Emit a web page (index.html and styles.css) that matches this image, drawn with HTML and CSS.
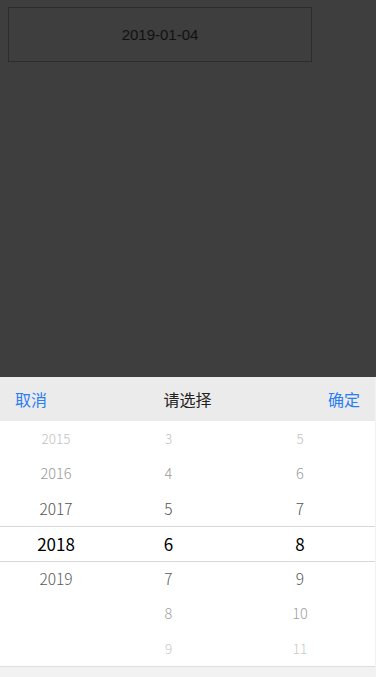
FILE: index.html
```html
<!DOCTYPE html>
<html lang="zh-CN">
<head>
<meta charset="utf-8">
<title>Picker</title>
<link rel="stylesheet" href="styles.css">
</head>
<body>
<div class="mask">
  <div class="date-box">2019-01-04</div>
</div>
<div class="picker">
  <div class="picker-header">
    <span class="btn">取消</span>
    <span class="title">请选择</span>
    <span class="btn">确定</span>
  </div>
  <div class="picker-body">
    <div class="col col-year">
      <div class="cell l3">2015</div>
      <div class="cell l2">2016</div>
      <div class="cell l1">2017</div>
      <div class="cell l0">2018</div>
      <div class="cell l1b">2019</div>
      <div class="cell"></div>
      <div class="cell"></div>
    </div>
    <div class="col col-month">
      <div class="cell l3">3</div>
      <div class="cell l2">4</div>
      <div class="cell l1">5</div>
      <div class="cell l0">6</div>
      <div class="cell l1b">7</div>
      <div class="cell l2b">8</div>
      <div class="cell l3b">9</div>
    </div>
    <div class="col col-day">
      <div class="cell l3">5</div>
      <div class="cell l2">6</div>
      <div class="cell l1">7</div>
      <div class="cell l0">8</div>
      <div class="cell l1b">9</div>
      <div class="cell l2b">10</div>
      <div class="cell l3b">11</div>
    </div>
    <div class="sel-line top"></div>
    <div class="sel-line bottom"></div>
  </div>
</div>
</body>
</html>
```
FILE: styles.css
```css
html, body {
  margin: 0;
  padding: 0;
}
body {
  width: 376px;
  height: 677px;
  background: #f2f2f2;
  font-family: "Noto Sans CJK SC", "Noto Sans", sans-serif;
  overflow: hidden;
}
.mask {
  height: 377px;
  background: #3e3e3e;
  padding: 7px 0 0 8px;
  box-sizing: border-box;
}
.date-box {
  width: 304px;
  height: 55px;
  box-sizing: border-box;
  border: 1px solid #2c2c2c;
  display: flex;
  align-items: center;
  justify-content: center;
  font-family: "Liberation Sans", Arial, sans-serif;
  font-size: 15px;
  color: #111;
}
.picker {
  width: 375px;
  background: #fff;
  border-bottom: 1px solid #dedede;
}
.picker-header {
  height: 44px;
  background: #ebebeb;
  display: flex;
  align-items: center;
  justify-content: space-between;
  padding: 0 15px;
  font-size: 16px;
}
.btn {
  color: #2a7df4;
  width: 50px;
}
.btn:last-child {
  text-align: right;
}
.title {
  color: #222;
  font-size: 16px;
}
.picker-body {
  position: relative;
  display: grid;
  grid-template-columns: 112px 113px 1fr;
  height: 245px;
}
.col {
  display: flex;
  flex-direction: column;
}
.cell {
  height: 35px;
  display: flex;
  align-items: center;
  justify-content: center;
  line-height: 1;
  font-weight: 300;
}
.l0 { font-size: 17px; color: #000; font-weight: 400; }
.l1 { font-size: 15.5px; color: #555; }
.l2 { font-size: 14.5px; color: #999; }
.l3 { font-size: 13.5px; color: #c2c2c2; }
.l1b { font-size: 15.5px; color: #5a5a5a; }
.l2b { font-size: 14.5px; color: #a0a0a0; }
.l3b { font-size: 13.5px; color: #c8c8c8; }
.sel-line {
  position: absolute;
  left: 0;
  right: 0;
  height: 1px;
  background: #d8d8d8;
}
.sel-line.top { top: 105px; }
.sel-line.bottom { top: 140px; }
```
